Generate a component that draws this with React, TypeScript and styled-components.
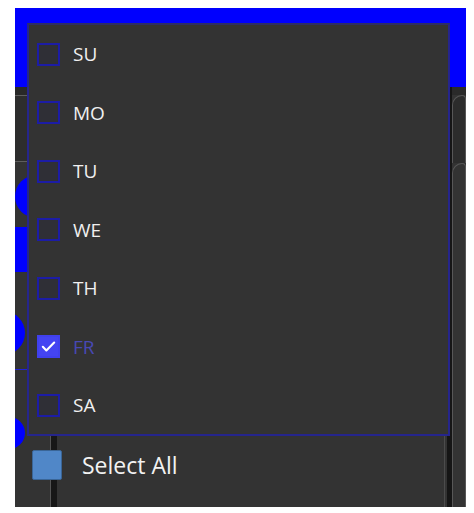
import React from "react";
import styled, { createGlobalStyle } from "styled-components";

const Global = createGlobalStyle`
  html, body { margin: 0; padding: 0; background: #ffffff; }
  body { font-family: "Open Sans", "Noto Sans", "Liberation Sans", sans-serif; }
  * { box-sizing: border-box; }
`;

const Page = styled.div`
  width: 474px;
  height: 513px;
  padding: 8px 0 0 15px;
`;

const Frame = styled.div`
  position: relative;
  width: 451px;
  height: 499px;
  background: #333333;
  display: flex;
  flex-direction: column;
  overflow: hidden;
`;

const Header = styled.div`
  height: 79px;
  flex: none;
  background: #0000fe;
`;

const Body = styled.div`
  flex: 1;
  display: grid;
  grid-template-columns: 13px 1fr 22px;
  min-height: 0;
`;

const LeftRail = styled.div`
  display: flex;
  flex-direction: column;
  align-items: flex-start;
`;

const DarkBlock = styled.div`
  width: 13px;
  height: 75px;
  flex: none;
  background: #282828;
  padding-top: 8px;
`;

const DarkInner = styled.div`
  height: 100%;
  background: #2d2d2d;
  border-top: 1px solid #5e5e5e;
  border-bottom: 1px solid #5e5e5e;
`;

const Dot = styled.div<{ $size: number; $top: number; $left: number }>`
  flex: none;
  width: ${(p) => p.$size}px;
  height: ${(p) => p.$size}px;
  margin-top: ${(p) => p.$top}px;
  margin-left: ${(p) => p.$left}px;
  border-radius: 50%;
  background: #0000ff;
`;

const BlueBar = styled.div`
  flex: none;
  width: 13px;
  height: 45px;
  margin-top: 9px;
  background: #0000ff;
`;

const BlueLine = styled.div<{ $top: number }>`
  flex: none;
  width: 13px;
  height: 1px;
  margin-top: ${(p) => p.$top}px;
  background: #2222d0;
`;

const Main = styled.div`
  display: flex;
  flex-direction: column;
  justify-content: flex-end;
  padding: 0 0 27px 4px;
  background: linear-gradient(
    to right,
    transparent 22px,
    #555555 22px,
    #555555 23px,
    #171717 23px,
    #171717 29px,
    transparent 29px
  );
`;

const SelectAllRow = styled.div`
  display: flex;
  align-items: center;
  gap: 20px;
`;

const BigBox = styled.div`
  width: 30px;
  height: 30px;
  border-radius: 2px;
  background: #5087c8;
  border: 1.5px solid #3a6596;
`;

const SelectAllLabel = styled.span`
  font-size: 23px;
  color: #f2f2f2;
  line-height: 1;
`;

const RightRail = styled.div`
  display: flex;
  flex-direction: column;
  padding: 8px 0 0 8px;
  background: linear-gradient(
      to right,
      #4c4c4c 0,
      #4c4c4c 1px,
      #333333 1px,
      #333333 3px,
      #151515 3px,
      #151515 8px,
      transparent 8px
    ),
    linear-gradient(to bottom, #2a2a2a 0, #2a2a2a 8px, #333333 8px);
`;

const RailCard = styled.div<{ $h?: number; $bg: string }>`
  flex: ${(p) => (p.$h ? "none" : "1")};
  height: ${(p) => (p.$h ? `${p.$h}px` : "auto")};
  background: ${(p) => p.$bg};
  border: 1px solid #575757;
  border-bottom: none;
  border-top-left-radius: 10px;
  border-top-right-radius: 4px;
`;

const Popup = styled.div`
  position: absolute;
  left: 12px;
  top: 15px;
  width: 423px;
  height: 413px;
  background: #333333;
  border: 2px solid #25258c;
  border-top-color: #2e2e66;
  display: flex;
  flex-direction: column;
  z-index: 2;
`;

const Item = styled.div`
  height: 58.5px;
  flex: none;
  display: flex;
  align-items: center;
  gap: 13px;
  padding-left: 8px;
`;

const Box = styled.div<{ $checked: boolean }>`
  width: 23px;
  height: 23px;
  flex: none;
  display: flex;
  align-items: center;
  justify-content: center;
  border: 2.5px solid ${(p) => (p.$checked ? "#4040ee" : "#1c1ca6")};
  background: ${(p) => (p.$checked ? "#4444f2" : "#2f2f36")};
`;

const Label = styled.span<{ $checked: boolean }>`
  font-size: 19px;
  font-weight: 400;
  line-height: 1;
  color: ${(p) => (p.$checked ? "#4848b4" : "#f0f0f0")};
  margin-top: 1px;
`;

const days = ["SU", "MO", "TU", "WE", "TH", "FR", "SA"];
const checkedDays = new Set(["FR"]);

const Check = () => (
  <svg width="17" height="17" viewBox="0 0 24 24" fill="none">
    <path
      d="M4 12.5l5 5L20 6.5"
      stroke="#ffffff"
      strokeWidth="3"
      strokeLinecap="round"
      strokeLinejoin="round"
    />
  </svg>
);

export default function App() {
  return (
    <>
      <Global />
      <Page>
        <Frame>
          <Header />
          <Body>
            <LeftRail>
              <DarkBlock>
                <DarkInner />
              </DarkBlock>
              <Dot $size={43} $top={13} $left={0} />
              <BlueBar />
              <Dot $size={44} $top={39} $left={-34} />
              <BlueLine $top={14} />
              <Dot $size={32} $top={47} $left={-22} />
            </LeftRail>
            <Main>
              <SelectAllRow>
                <BigBox />
                <SelectAllLabel>Select All</SelectAllLabel>
              </SelectAllRow>
            </Main>
            <RightRail>
              <RailCard $h={68} $bg="#2c2c2c" />
              <RailCard $bg="#333333" />
            </RightRail>
          </Body>
          <Popup>
            {days.map((d) => {
              const c = checkedDays.has(d);
              return (
                <Item key={d}>
                  <Box $checked={c}>{c && <Check />}</Box>
                  <Label $checked={c}>{d}</Label>
                </Item>
              );
            })}
          </Popup>
        </Frame>
      </Page>
    </>
  );
}
